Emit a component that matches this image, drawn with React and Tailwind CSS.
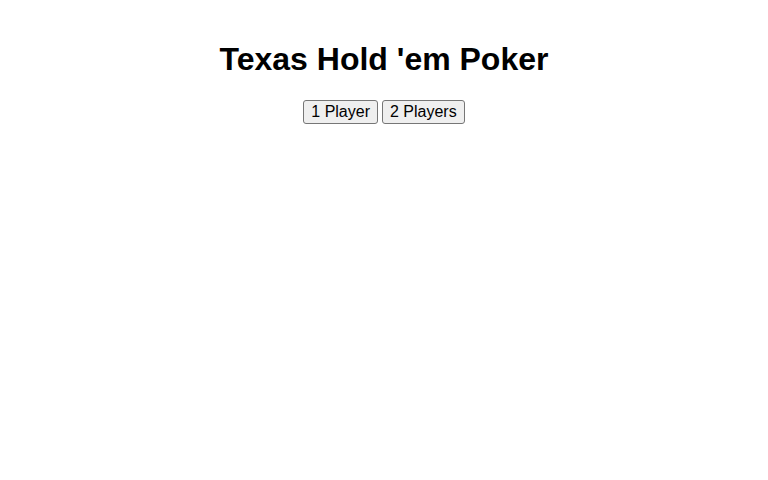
export default function App() {
  return (
    <div className="min-h-[480px] bg-white p-[20px] text-center text-black" style={{ fontFamily: '"Liberation Sans", Arial, sans-serif' }}>
      <h1 className="my-[21.44px] text-[32px] font-bold leading-[normal]">Texas Hold 'em Poker</h1>
      <div className="flex justify-center gap-[4px]">
        <button className="rounded-[3px] border border-[#767676] bg-[#efefef] px-[7px] py-[2px] text-[16px] leading-[normal] text-black">1 Player</button>
        <button className="rounded-[3px] border border-[#767676] bg-[#efefef] px-[7px] py-[2px] text-[16px] leading-[normal] text-black">2 Players</button>
      </div>
    </div>
  );
}
